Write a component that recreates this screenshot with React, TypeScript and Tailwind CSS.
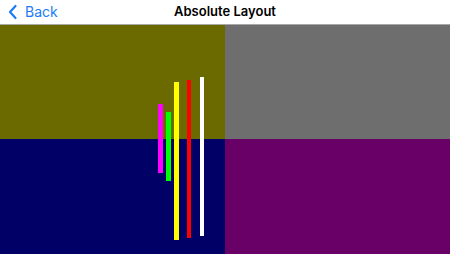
const bars = [
  { left: 158, top: 104, w: 5, h: 69, color: 'bg-[#ff00ff]' },
  { left: 166, top: 112, w: 5, h: 69, color: 'bg-[#00ff00]' },
  { left: 174, top: 82, w: 5, h: 158, color: 'bg-[#ffff00]' },
  { left: 187, top: 80, w: 4, h: 158, color: 'bg-[#ff0000]' },
  { left: 200, top: 77, w: 4, h: 159, color: 'bg-white' },
];

export default function App() {
  return (
    <div className="w-[450px] h-[254px] flex flex-col overflow-hidden font-['Inter','Liberation_Sans',sans-serif]">
      {/* ── Nav bar ── */}
      <div className="h-[25px] shrink-0 relative flex items-center bg-white border-b border-[#a8a8a8]">
        <div className="flex items-center text-[#1a7cf9]">
          <svg width="25" height="24" viewBox="0 0 25 24" fill="none" stroke="currentColor" strokeWidth="2.2" strokeLinecap="round" strokeLinejoin="round">
            <polyline points="15.5,6 10,12 15.5,18" />
          </svg>
          <span className="text-[14px] leading-none">Back</span>
        </div>
        <div className="absolute inset-0 flex items-center justify-center text-[13px] font-semibold text-black">
          Absolute Layout
        </div>
      </div>

      {/* ── Canvas ── */}
      <div className="relative flex-1 grid grid-cols-2 grid-rows-[114px_1fr]">
        <div className="bg-[#6b6a00]" />
        <div className="bg-[#6e6e6e]" />
        <div className="bg-[#000066]" />
        <div className="bg-[#680068]" />
        {bars.map((b, i) => (
          <div
            key={i}
            className={`absolute ${b.color}`}
            style={{ left: b.left, top: b.top - 25, width: b.w, height: b.h }}
          />
        ))}
      </div>
    </div>
  );
}
